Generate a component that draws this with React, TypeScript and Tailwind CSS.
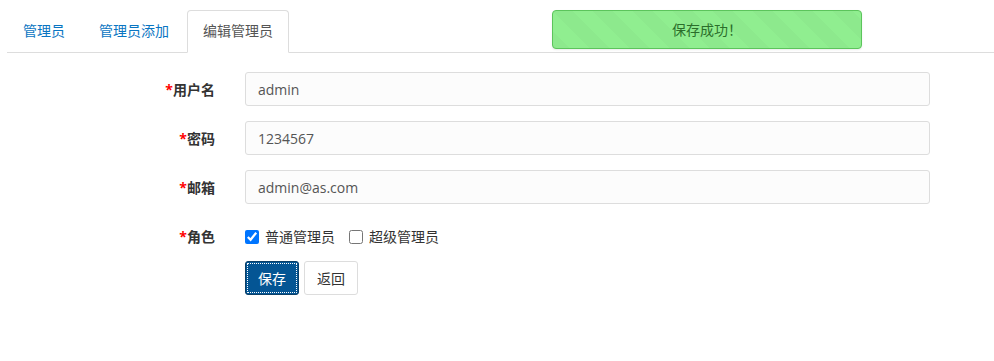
import React from "react";

const fontStack = "font-['Open_Sans','Noto_Sans_CJK_SC',sans-serif]";

interface FieldProps {
  label: string;
  value: string;
}

const Field: React.FC<FieldProps> = ({ label, value }) => (
  <div className="flex items-center">
    <label className="w-[215px] text-right text-[14px] font-bold text-[#333]">
      <span className="text-[#f00]">*</span>
      {label}
    </label>
    <input
      className="ml-[30px] h-[34px] w-[685px] rounded-[3px] border border-[#ddd] bg-[#fcfcfc] px-[12px] text-[14px] text-[#555] outline-none"
      defaultValue={value}
    />
  </div>
);

const tabs = ["管理员", "管理员添加", "编辑管理员"];

export default function App() {
  return (
    <div className={`relative h-[361px] w-[994px] bg-white ${fontStack}`}>
      <div className="ml-[7px] flex border-b border-[#ddd] pt-[10px]">
        {tabs.map((t, i) =>
          i === 2 ? (
            <div
              key={t}
              className="-mb-px rounded-t-[4px] border border-b-transparent border-[#ddd] bg-white px-[15px] py-[10px] text-[14px] leading-[20px] text-[#555]"
            >
              {t}
            </div>
          ) : (
            <div key={t} className="mr-[2px] border border-transparent px-[15px] py-[10px] text-[14px] leading-[20px] text-[#0a75c2]">
              {t}
            </div>
          )
        )}
      </div>

      <div className="absolute left-[552px] top-[10px] flex h-[39px] w-[310px] items-center justify-center rounded-[4px] border border-[#5cc45c] bg-[#90ee90] bg-[linear-gradient(45deg,rgba(0,0,0,0.02)_25%,transparent_25%,transparent_50%,rgba(0,0,0,0.02)_50%,rgba(0,0,0,0.02)_75%,transparent_75%,transparent)] bg-[length:40px_40px] text-[14px] text-[#2b6e2b] shadow-[0_1px_2px_rgba(0,0,0,0.08)]">
        保存成功！
      </div>

      <div className="mt-[19px] flex flex-col gap-[15px]">
        <Field label="用户名" value="admin" />
        <Field label="密码" value="1234567" />
        <Field label="邮箱" value="admin@as.com" />
      </div>

      <div className="mt-[22px] flex items-center">
        <label className="w-[215px] text-right text-[14px] font-bold text-[#333]">
          <span className="text-[#f00]">*</span>角色
        </label>
        <div className="ml-[30px] flex items-center text-[14px] text-[#333]">
          <input type="checkbox" defaultChecked className="m-0 h-[14px] w-[14px] accent-[#0075ff]" />
          <span className="ml-[6px]">普通管理员</span>
          <input type="checkbox" className="m-0 ml-[14px] h-[14px] w-[14px]" />
          <span className="ml-[6px]">超级管理员</span>
        </div>
      </div>

      <div className="ml-[245px] mt-[14px] flex gap-[5px]">
        <button className="h-[34px] w-[54px] rounded-[3px] border border-[#0b3e66] bg-[#045594] text-[14px] text-white outline-1 -outline-offset-[3px] outline-dotted outline-white">
          保存
        </button>
        <button className="h-[34px] w-[54px] rounded-[3px] border border-[#ddd] bg-white text-[14px] text-[#333]">
          返回
        </button>
      </div>
    </div>
  );
}
